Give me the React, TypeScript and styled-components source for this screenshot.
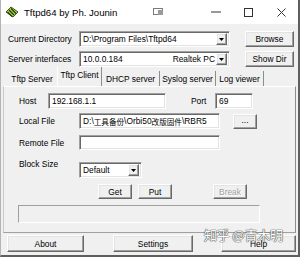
import styled, { createGlobalStyle } from 'styled-components';

const GlobalStyle = createGlobalStyle`
  html, body {
    margin: 0;
    padding: 0;
    background: #f0f0f0;
  }
  body {
    font-family: "Liberation Sans", Arial, "Noto Sans CJK SC", sans-serif;
    font-size: 8.4px;
    color: #000;
  }
`;

const tabs = [
  { label: 'Tftp Server', width: 49, active: false, sep: false },
  { label: 'Tftp Client', width: 45, active: true, sep: true },
  { label: 'DHCP server', width: 58, active: false, sep: true },
  { label: 'Syslog server', width: 56, active: false, sep: true },
  { label: 'Log viewer', width: 48, active: false, sep: true },
];

function AppIcon() {
  return (
    <svg width="14" height="12" viewBox="0 0 14 12">
      <path d="M1 6 L6 1 L13 6 L8 11 Z" fill="#b6d84a" stroke="#2f5a12" strokeWidth="1" />
      <path d="M4 4 L9 9 M6 2.5 L11 7.5 M2.5 6 L7 10.5" stroke="#1c3a0a" strokeWidth="1.2" />
    </svg>
  );
}

function CastIcon() {
  return (
    <svg width="11" height="8" viewBox="0 0 11 8">
      <rect x="0.5" y="0.5" width="9" height="6" fill="none" stroke="#7a7a7a" />
      <rect x="5" y="2" width="5" height="5" fill="#9a9a9a" />
    </svg>
  );
}

function ArrowDown() {
  return (
    <svg width="5" height="3" viewBox="0 0 5 3">
      <path d="M0 0 H5 L2.5 3 Z" fill="#000" />
    </svg>
  );
}

export default function App() {
  return (
    <>
      <GlobalStyle />
      <Window>
        <TitleBar>
          <AppIcon />
          <TitleText>Tftpd64 by Ph. Jounin</TitleText>
          <Controls>
            <CastSlot>
              <CastIcon />
            </CastSlot>
            <Control>
              <svg width="10" height="2" viewBox="0 0 10 2">
                <path d="M0 1 H10" stroke="#333" strokeWidth="1" />
              </svg>
            </Control>
            <Control>
              <svg width="9" height="9" viewBox="0 0 9 9">
                <rect x="0.5" y="0.5" width="8" height="8" fill="none" stroke="#333" />
              </svg>
            </Control>
            <Control>
              <svg width="9" height="9" viewBox="0 0 9 9">
                <path d="M0.5 0.5 L8.5 8.5 M8.5 0.5 L0.5 8.5" stroke="#333" strokeWidth="1" />
              </svg>
            </Control>
          </Controls>
        </TitleBar>

        <TopRow $first>
          <TopLabel>Current Directory</TopLabel>
          <Combo>
            <ComboText>D:\Program Files\Tftpd64</ComboText>
            <ComboArrow>
              <ArrowDown />
            </ComboArrow>
          </Combo>
          <SideButton>Browse</SideButton>
        </TopRow>
        <TopRow>
          <TopLabel>Server interfaces</TopLabel>
          <Combo>
            <ComboText>10.0.0.184</ComboText>
            <ComboRight>Realtek PC</ComboRight>
            <ComboArrow>
              <ArrowDown />
            </ComboArrow>
          </Combo>
          <SideButton>Show Dir</SideButton>
        </TopRow>

        <TabStrip>
          {tabs.map((t) => (
            <Tab key={t.label} $width={t.width} $active={t.active} $sep={t.sep}>
              {t.label}
            </Tab>
          ))}
        </TabStrip>

        <Panel>
          <FieldRow $top={6} $height={16}>
            <FieldLabel $width={29}>Host</FieldLabel>
            <Input $width={118} $height={16}>192.168.1.1</Input>
            <PortLabel>Port</PortLabel>
            <Input $width={38} $height={16}>69</Input>
          </FieldRow>
          <FieldRow $top={4} $height={16}>
            <FieldLabel $width={60}>Local File</FieldLabel>
            <Input $width={141} $height={16}>
              D:\<Cjk>工具备份</Cjk>\Orbi50<Cjk>改版固件</Cjk>\RBR5
            </Input>
            <DotsButton>...</DotsButton>
          </FieldRow>
          <FieldRow $top={6} $height={15}>
            <FieldLabel $width={60}>Remote File</FieldLabel>
            <Input $width={141} $height={15} />
          </FieldRow>
          <BlockRow>
            <BlockLabel>Block Size</BlockLabel>
            <BlockSelect>
              <ComboText>Default</ComboText>
              <ComboArrow>
                <ArrowDown />
              </ComboArrow>
            </BlockSelect>
          </BlockRow>
          <ActionRow>
            <ActionButton $left={79}>Get</ActionButton>
            <ActionButton $left={6}>Put</ActionButton>
            <ActionButton $left={41} $disabled>
              Break
            </ActionButton>
          </ActionRow>
          <Progress />
        </Panel>

        <BottomRow>
          <BottomButton $left={6} $width={77}>
            About
          </BottomButton>
          <BottomButton $left={29} $width={80}>
            Settings
          </BottomButton>
          <BottomButton $left={28} $width={75}>
            Help
          </BottomButton>
        </BottomRow>

        <Watermark>知乎 @青木明</Watermark>
      </Window>
    </>
  );
}

const Window = styled.div`
  position: relative;
  box-sizing: border-box;
  width: 300px;
  height: 257px;
  background: #f0f0f0;
  border-left: 1px solid #b4b4b4;
  border-right: 2px solid #5e5e5e;
  border-bottom: 2px solid #5e5e5e;
  display: flex;
  flex-direction: column;
  overflow: hidden;
`;

const TitleBar = styled.div`
  height: 24px;
  flex: none;
  background: #ffffff;
  display: flex;
  align-items: center;
  padding-left: 4px;
`;

const TitleText = styled.div`
  margin-left: 5px;
  font-size: 9.6px;
  color: #000;
`;

const Controls = styled.div`
  margin-left: auto;
  display: flex;
  align-items: center;
  height: 100%;
`;

const CastSlot = styled.div`
  width: 34px;
  margin-right: 24px;
  display: flex;
  align-items: center;
  justify-content: center;
`;

const Control = styled.div`
  width: 33px;
  height: 100%;
  display: flex;
  align-items: center;
  justify-content: center;
`;

const TopRow = styled.div<{ $first?: boolean }>`
  display: flex;
  align-items: center;
  height: 16px;
  padding-left: 7px;
  margin-top: ${({ $first }) => ($first ? 7 : 4)}px;
`;

const TopLabel = styled.div`
  width: 71px;
  white-space: nowrap;
`;

const sunken = `
  box-sizing: border-box;
  background: #ffffff;
  border: 1px solid;
  border-color: #a0a0a0 #ffffff #ffffff #a0a0a0;
  box-shadow: inset 1px 1px #696969, inset -1px -1px #e3e3e3;
`;

const raised = `
  box-sizing: border-box;
  background: #f0f0f0;
  border: 1px solid;
  border-color: #ffffff #696969 #696969 #ffffff;
  box-shadow: inset -1px -1px #a0a0a0, inset 1px 1px #e3e3e3;
`;

const Combo = styled.div`
  ${sunken}
  width: 151px;
  height: 16px;
  display: flex;
  align-items: center;
  padding: 0 2px 0 3px;
  overflow: hidden;
`;

const ComboText = styled.span`
  white-space: nowrap;
  flex: 1;
`;

const ComboRight = styled.span`
  white-space: nowrap;
  margin-right: 1px;
`;

const ComboArrow = styled.div`
  ${raised}
  width: 11px;
  height: 12px;
  flex: none;
  display: flex;
  align-items: center;
  justify-content: center;
`;

const SideButton = styled.div`
  ${raised}
  width: 49px;
  height: 16px;
  margin-left: 15px;
  display: flex;
  align-items: center;
  justify-content: center;
`;

const TabStrip = styled.div`
  display: flex;
  align-items: flex-end;
  height: 18px;
  margin-top: 1px;
  padding-left: 7px;
`;

const Tab = styled.div<{ $width: number; $active: boolean; $sep: boolean }>`
  box-sizing: border-box;
  width: ${({ $width }) => $width}px;
  height: ${({ $active }) => ($active ? 19 : 15)}px;
  display: flex;
  align-items: center;
  justify-content: center;
  white-space: nowrap;
  padding-bottom: ${({ $active }) => ($active ? 3 : 0)}px;
  border-right: ${({ $sep }) => ($sep ? '1px solid #8c8c8c' : '1px solid transparent')};
  border-left: ${({ $active }) => ($active ? '1px solid #ffffff' : 'none')};
`;

const Panel = styled.div`
  box-sizing: border-box;
  height: 147px;
  margin: 0 2px 0 2px;
  border: 1px solid;
  border-color: #ffffff #8c8c8c #a0a0a0 #c8c8c8;
  display: flex;
  flex-direction: column;
  padding-left: 15px;
`;

const FieldRow = styled.div<{ $top: number; $height: number }>`
  display: flex;
  align-items: center;
  height: ${({ $height }) => $height}px;
  margin-top: ${({ $top }) => $top}px;
`;

const FieldLabel = styled.div<{ $width: number }>`
  width: ${({ $width }) => $width}px;
  white-space: nowrap;
`;

const Input = styled.div<{ $width: number; $height: number }>`
  ${sunken}
  width: ${({ $width }) => $width}px;
  height: ${({ $height }) => $height}px;
  padding-left: 3px;
  display: flex;
  align-items: center;
  white-space: nowrap;
  overflow: hidden;
`;

const Cjk = styled.span`
  font-family: "Noto Sans CJK SC", sans-serif;
  font-size: 7.6px;
`;

const PortLabel = styled.div`
  margin-left: 25px;
  width: 24px;
`;

const DotsButton = styled.div`
  ${raised}
  width: 24px;
  height: 15px;
  margin-left: 13px;
  display: flex;
  align-items: center;
  justify-content: center;
  padding-bottom: 2px;
`;

const BlockRow = styled.div`
  display: flex;
  align-items: flex-start;
  margin-top: 7px;
  height: 21px;
`;

const BlockLabel = styled.div`
  width: 60px;
  margin-top: 2px;
  white-space: nowrap;
`;

const BlockSelect = styled.div`
  ${sunken}
  width: 63px;
  height: 16px;
  margin-top: 5px;
  display: flex;
  align-items: center;
  padding: 0 2px 0 3px;
`;

const ActionRow = styled.div`
  display: flex;
  height: 15px;
  margin-top: 6px;
`;

const ActionButton = styled.div<{ $left: number; $disabled?: boolean }>`
  ${raised}
  width: 34px;
  height: 15px;
  margin-left: ${({ $left }) => $left}px;
  display: flex;
  align-items: center;
  justify-content: center;
  color: ${({ $disabled }) => ($disabled ? '#a0a0a0' : '#000')};
  text-shadow: ${({ $disabled }) => ($disabled ? '1px 1px #ffffff' : 'none')};
`;

const Progress = styled.div`
  box-sizing: border-box;
  width: 242px;
  height: 18px;
  margin-top: 6px;
  margin-left: -1px;
  border: 1px solid;
  border-color: #a0a0a0 #ffffff #ffffff #a0a0a0;
  background: #f0f0f0;
`;

const BottomRow = styled.div`
  display: flex;
  height: 17px;
  margin-top: 2px;
`;

const BottomButton = styled.div<{ $left: number; $width: number }>`
  ${raised}
  width: ${({ $width }) => $width}px;
  height: 17px;
  margin-left: ${({ $left }) => $left}px;
  display: flex;
  align-items: center;
  justify-content: center;
`;

const Watermark = styled.div`
  position: absolute;
  left: 203px;
  top: 225px;
  font-family: "Noto Sans CJK SC", sans-serif;
  font-size: 13px;
  color: #ffffff;
  white-space: nowrap;
  letter-spacing: -0.2px;
  text-shadow: 0 0 1px #4a4a4a, 0 0 1px #4a4a4a, 0 0 1px #4a4a4a;
`;
